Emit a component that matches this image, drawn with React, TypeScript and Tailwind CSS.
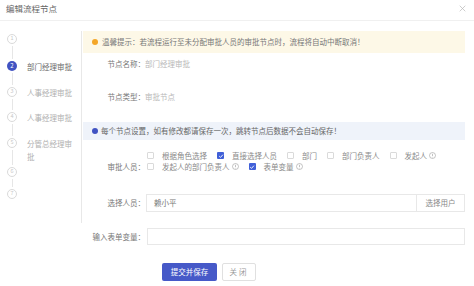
import React from "react";

const steps = [
  { n: 1, label: "", h: "h-[27px]" },
  { n: 2, label: "部门经理审批", h: "h-[26px]", active: true },
  { n: 3, label: "人事经理审批", h: "h-[25px]" },
  { n: 4, label: "人事经理审批", h: "h-[26px]" },
  { n: 5, label: "分管总经理审批", h: "h-[29px]" },
  { n: 6, label: "", h: "h-[22px]" },
  { n: 7, label: "", h: "h-[14px]", last: true },
];

function InfoMark() {
  return (
    <svg width="7" height="7" viewBox="0 0 14 14" className="inline-block ml-[2px]">
      <circle cx="7" cy="7" r="6" fill="none" stroke="#a0a0a0" strokeWidth="1.2" />
      <line x1="7" y1="3.5" x2="7" y2="8" stroke="#a0a0a0" strokeWidth="1.3" />
      <circle cx="7" cy="10.2" r="0.9" fill="#a0a0a0" />
    </svg>
  );
}

function Box({ checked }: { checked?: boolean }) {
  return checked ? (
    <span className="w-[7px] h-[7px] bg-[#4160d8] rounded-[1px] flex items-center justify-center shrink-0">
      <svg width="6" height="6" viewBox="0 0 10 10">
        <path d="M2 5.2 L4.2 7.3 L8.2 2.8" fill="none" stroke="white" strokeWidth="1.5" />
      </svg>
    </span>
  ) : (
    <span className="w-[7px] h-[7px] border border-[#dadada] rounded-[1px] bg-white shrink-0" />
  );
}

function Check({ label, checked, info }: { label: string; checked?: boolean; info?: boolean }) {
  return (
    <div className="flex items-center mr-[10px]">
      <Box checked={checked} />
      <span className="ml-[8px] text-[#8a8a8a] whitespace-nowrap">{label}</span>
      {info && <InfoMark />}
    </div>
  );
}

export default function App() {
  return (
    <div className="w-[474px] h-[286px] bg-white overflow-hidden text-[7.5px] font-['Noto_Sans_CJK_SC',sans-serif]">
      {/* header */}
      <div className="h-[21px] border-b border-[#f0f0f0] flex items-center justify-between pl-[6px] pr-[8px]">
        <span className="text-[8.5px] text-[#666] leading-none -mt-[3px]">编辑流程节点</span>
        <svg width="7" height="7" viewBox="0 0 10 10" className="-mt-[3px]">
          <path d="M1 1 L9 9 M9 1 L1 9" stroke="#b8b8b8" strokeWidth="1" />
        </svg>
      </div>

      <div className="flex pt-[10px]">
        {/* steps */}
        <div className="w-[82px] h-[192px] border-r border-[#e8e8e8] pt-[3px] pl-[7px] shrink-0">
          {steps.map((s) => (
            <div key={s.n} className={`flex ${s.h}`}>
              <div className="w-[10px] flex flex-col items-center shrink-0">
                {s.active ? (
                  <div className="w-[10px] h-[10px] rounded-full bg-[#4153c2] flex items-center justify-center text-white text-[6px] leading-none shrink-0">
                    {s.n}
                  </div>
                ) : (
                  <div className="w-[10px] h-[10px] rounded-full border border-[#dadada] flex items-center justify-center text-[#c8c8c8] text-[5.5px] leading-none shrink-0">
                    {s.n}
                  </div>
                )}
                {!s.last && <div className="w-px flex-1 bg-[#e6e6e6] my-[2px]" />}
              </div>
              {s.label && (
                <div
                  className={`ml-[10px] w-[50px] leading-[13px] -mt-[1.5px] ${
                    s.active ? "text-[#6a6a6a]" : "text-[#b0b0b0]"
                  }`}
                >
                  {s.label}
                </div>
              )}
            </div>
          ))}
        </div>

        {/* content */}
        <div className="flex-1 pl-[1px] pr-[9px] flex flex-col">
          <div className="h-[22px] bg-[#fdf8e7] flex items-center pl-[9px] text-[#777]">
            <span className="w-[6px] h-[6px] rounded-full bg-[#f4a628] shrink-0" />
            <span className="ml-[4px]">温馨提示：若流程运行至未分配审批人员的审批节点时，流程将自动中断取消！</span>
          </div>

          <div className="h-[14px] mt-[4px] flex items-center">
            <span className="w-[62px] text-right text-[#777]">节点名称：</span>
            <span className="text-[#b8b8b8]">部门经理审批</span>
          </div>

          <div className="h-[14px] mt-[19px] flex items-center">
            <span className="w-[62px] text-right text-[#777]">节点类型：</span>
            <span className="text-[#b8b8b8]">审批节点</span>
          </div>

          <div className="h-[18px] mt-[18px] bg-[#eff3fa] flex items-center pl-[9px] text-[#666]">
            <span className="w-[6px] h-[6px] rounded-full bg-[#4153c2] shrink-0" />
            <span className="ml-[3px]">每个节点设置，如有修改都请保存一次，跳转节点后数据不会自动保存！</span>
          </div>

          <div className="mt-[10px] flex">
            <span className="w-[62px] text-right text-[#777] pt-[11px] leading-[11px]">审批人员：</span>
            <div className="flex flex-col pl-[2px]">
              <div className="h-[11px] flex items-center">
                <Check label="根据角色选择" />
                <Check label="直接选择人员" checked />
                <Check label="部门" />
                <Check label="部门负责人" />
                <Check label="发起人" info />
              </div>
              <div className="h-[11px] flex items-center">
                <Check label="发起人的部门负责人" info />
                <Check label="表单变量" checked info />
              </div>
            </div>
          </div>

          <div className="mt-[22px] flex items-center">
            <span className="w-[62px] text-right text-[#777]">选择人员：</span>
            <div className="flex-1 h-[18px] ml-[1px] border border-[#e8e8e8] flex items-center">
              <span className="flex-1 pl-[7px] text-[#777]">赖小平</span>
              <span className="h-full border-l border-[#e8e8e8] w-[48px] flex items-center justify-center text-[#888]">
                选择用户
              </span>
            </div>
          </div>

          <div className="mt-[16px] flex items-center">
            <span className="w-[62px] text-right text-[#777]">输入表单变量：</span>
            <div className="flex-1 h-[17px] ml-[2px] border border-[#e8e8e8]" />
          </div>

          <div className="mt-[18px] flex items-center pl-[79px]">
            <button className="w-[55px] h-[18px] bg-[#4659c8] text-white rounded-[2px] flex items-center justify-center">
              提交并保存
            </button>
            <button className="ml-[5px] w-[34px] h-[18px] bg-white border border-[#e0e0e0] text-[#999] rounded-[2px] flex items-center justify-center tracking-[2px]">
              关闭
            </button>
          </div>
        </div>
      </div>
    </div>
  );
}
